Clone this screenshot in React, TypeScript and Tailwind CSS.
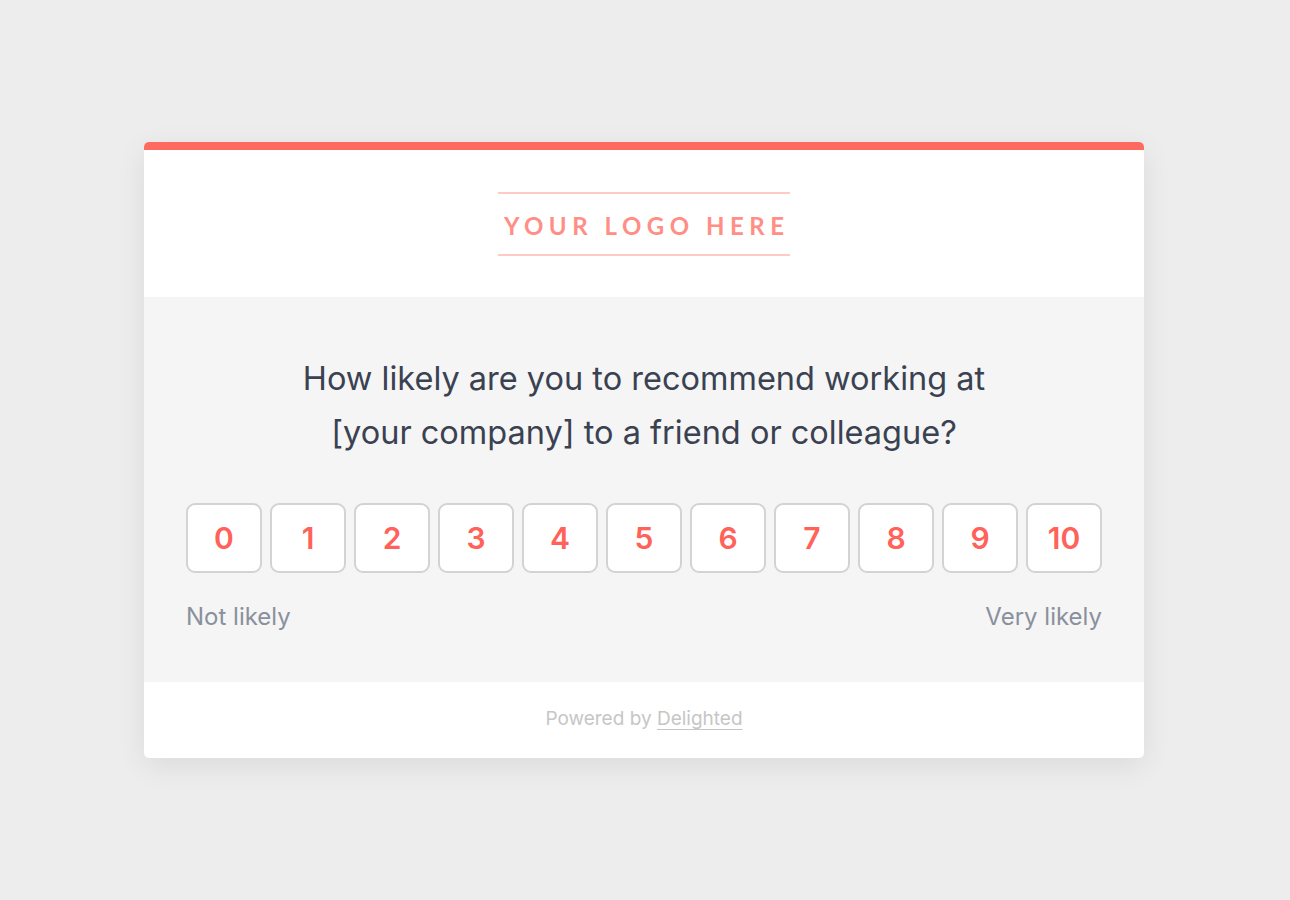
export default function App() {
  const scores = [0, 1, 2, 3, 4, 5, 6, 7, 8, 9, 10];

  return (
    <div
      className="min-h-screen w-full bg-[#eeeded] pt-[142px] pl-[144px]"
      style={{ fontFamily: "Inter, 'Liberation Sans', sans-serif" }}
    >
      <div className="w-[1000px] bg-white rounded-[5px] overflow-hidden shadow-[0_8px_30px_rgba(0,0,0,0.08)]">
        <div className="h-[8px] bg-[#ff6a60]" />

        {/* logo */}
        <div className="h-[147px] flex items-center justify-center">
          <div className="w-[292px] border-y-2 border-[#ffcac6] pt-[19px] pb-[15px] flex justify-center">
            <span
              className="whitespace-nowrap text-[24px] font-bold tracking-[0.23em] text-[#ff8e86] leading-[26px] pl-[0.23em]"
              style={{ fontFamily: "Lato, 'Open Sans', sans-serif" }}
            >
              YOUR LOGO HERE
            </span>
          </div>
        </div>

        {/* question */}
        <div className="bg-[#f5f5f5] px-[42px] pt-[55px] pb-[50px]">
          <h1 className="text-center text-[32.5px] leading-[54px] text-[#3a4252] font-normal">
            How likely are you to recommend working at
            <br />
            [your company] to a friend or colleague?
          </h1>

          <div className="mt-[43px] flex gap-[8px]">
            {scores.map((n) => (
              <button
                key={n}
                className="w-[76px] h-[70px] bg-white border-2 border-[#d3d3d3] rounded-[9px] flex items-center justify-center text-[30px] font-semibold text-[#ff6259]"
              >
                {n}
              </button>
            ))}
          </div>

          <div className="mt-[29px] flex justify-between text-[24px] leading-[30px] text-[#8a909c]">
            <span>Not likely</span>
            <span>Very likely</span>
          </div>
        </div>

        {/* footer */}
        <div className="h-[76px] flex items-center justify-center text-[19px] text-[#c6c6c6] pb-[2px]">
          <span>
            Powered by{" "}
            <a className="underline underline-offset-[4px] decoration-[#c6c6c6]" href="#">
              Delighted
            </a>
          </span>
        </div>
      </div>
    </div>
  );
}
